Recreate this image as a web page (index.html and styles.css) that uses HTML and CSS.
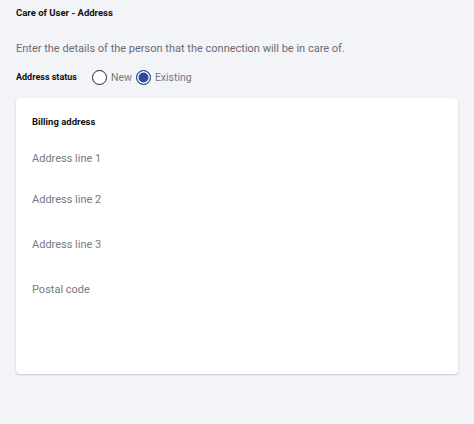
FILE: index.html
```html
<!DOCTYPE html>
<html>
<head>
<meta charset="utf-8">
<link rel="stylesheet" href="styles.css">
</head>
<body>
<div class="page">
  <h1 class="title">Care of User - Address</h1>
  <p class="desc">Enter the details of the person that the connection will be in care of.</p>
  <div class="status">
    <span class="status-label">Address status</span>
    <label class="radio"><span class="dot"></span><span class="radio-text">New</span></label>
    <label class="radio"><span class="dot checked"></span><span class="radio-text">Existing</span></label>
  </div>
  <div class="card">
    <div class="card-title">Billing address</div>
    <div class="field f1">Address line 1</div>
    <div class="field f2">Address line 2</div>
    <div class="field f3">Address line 3</div>
    <div class="field f4">Postal code</div>
  </div>
</div>
</body>
</html>
```
FILE: styles.css
```css
html, body { margin: 0; padding: 0; }
body {
  background: #f3f4f8;
  font-family: Roboto, "Liberation Sans", sans-serif;
  width: 474px;
  height: 424px;
  overflow: hidden;
}
.page {
  padding: 0 16px;
}
.title {
  margin: 0;
  padding-top: 6px;
  font-size: 9.5px;
  font-weight: 700;
  line-height: 13px;
  color: #111;
}
.desc {
  margin: 0;
  margin-top: 23px;
  font-size: 11px;
  line-height: 13px;
  color: #6b6b70;
}
.status {
  display: flex;
  align-items: center;
  margin-top: 13px;
  height: 18px;
}
.status-label {
  font-size: 9px;
  font-weight: 700;
  color: #111;
  margin-right: 15px;
}
.radio {
  display: flex;
  align-items: center;
  margin-right: 4px;
}
.dot {
  width: 13px;
  height: 13px;
  border: 1.5px solid #222;
  border-radius: 50%;
  box-sizing: content-box;
  margin-right: 4px;
  background: #fff;
}
.dot.checked {
  border-color: #253f8f;
  background: #2e4a9e;
  box-shadow: inset 0 0 0 1.5px #fff;
}
.radio-text {
  font-size: 10.5px;
  color: #777a80;
}
.card {
  margin-top: 12px;
  width: 442px;
  height: 276px;
  background: #fff;
  border-radius: 4px;
  box-shadow: 0 1px 2px rgba(0,0,0,0.18), 0 0 1px rgba(0,0,0,0.08);
  padding: 17px 16px 16px;
  box-sizing: border-box;
}
.card-title {
  font-size: 9.5px;
  font-weight: 700;
  line-height: 13px;
  color: #111;
}
.field {
  font-size: 11px;
  line-height: 13px;
  color: #77797e;
}
.f1 { margin-top: 24px; }
.f2 { margin-top: 28px; }
.f3 { margin-top: 32px; }
.f4 { margin-top: 32px; }
```
